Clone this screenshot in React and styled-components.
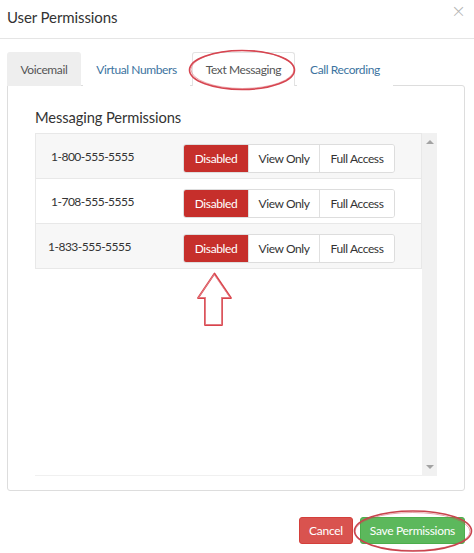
import React, { useState } from "react";
import styled, { createGlobalStyle } from "styled-components";

const GlobalStyle = createGlobalStyle`
  html, body {
    margin: 0;
    padding: 0;
    background: #fff;
  }
  body {
    font-family: Lato, "Open Sans", "Liberation Sans", sans-serif;
    color: #333;
  }
`;

const numbers = ["1-800-555-5555", "1-708-555-5555", "1-833-555-5555"];
const levels = [
  { key: "disabled", label: "Disabled", width: 64 },
  { key: "view", label: "View Only", width: 71 },
  { key: "full", label: "Full Access", width: 75 },
];

function App() {
  const [perms, setPerms] = useState(numbers.map(() => "disabled"));

  const setOne = (i, key) => {
    const next = [...perms];
    next[i] = key;
    setPerms(next);
  };

  return (
    <Modal>
      <GlobalStyle />
      <Header>
        <Title>User Permissions</Title>
        <Close>×</Close>
      </Header>
      <Body>
        <Tabs>
          <Tab grey>Voicemail</Tab>
          <Tab link>Virtual Numbers</Tab>
          <Tab active>Text Messaging</Tab>
          <Tab link>Call Recording</Tab>
          <TabCircle width="112" height="44" viewBox="0 0 112 44">
            <ellipse cx="56" cy="22" rx="52.5" ry="19.5" fill="none" stroke="#d64550" strokeWidth="1.6" />
            <ellipse cx="56.5" cy="21.5" rx="51.5" ry="19" fill="none" stroke="#d64550" strokeWidth="0.8" opacity="0.6" />
          </TabCircle>
        </Tabs>
        <Panel>
          <PanelTitle>Messaging Permissions</PanelTitle>
          <TableArea>
            <Rows>
              {numbers.map((n, i) => (
                <Row key={n} striped={i !== 1}>
                  <Phone indent={i === 2 ? 12 : 15}>{n}</Phone>
                  <Group>
                    {levels.map((l) => (
                      <GroupButton
                        key={l.key}
                        width={l.width}
                        danger={l.key === "disabled"}
                        onClick={() => setOne(i, l.key)}
                      >
                        {l.label}
                      </GroupButton>
                    ))}
                  </Group>
                </Row>
              ))}
              <Arrow width="38" height="56" viewBox="0 0 38 56">
                <path
                  d="M18.5 1.5 L35 26 L26 26 L26 53 L9 53 L9 26 L2 26 Z"
                  fill="none"
                  stroke="#d9434b"
                  strokeWidth="1.8"
                  strokeLinejoin="round"
                />
                <path
                  d="M18 2.5 L34 25.5 L25.5 25.5 L25.5 52.5 L9.5 52.5 L9.5 25.5 L2.5 25.5 Z"
                  fill="none"
                  stroke="#e58a90"
                  strokeWidth="0.8"
                />
              </Arrow>
            </Rows>
            <Scrollbar>
              <ScrollArrow />
              <ScrollArrow down />
            </Scrollbar>
          </TableArea>
        </Panel>
      </Body>
      <Footer>
        <FooterButton color="#d9534f" border="#d43f3a">Cancel</FooterButton>
        <FooterButton color="#5cb85c" border="#4cae4c">Save Permissions</FooterButton>
        <SaveCircle width="122" height="44" viewBox="0 0 122 44">
          <ellipse cx="61" cy="22" rx="58.5" ry="20" fill="none" stroke="#c9434d" strokeWidth="1.6" />
          <ellipse cx="60.5" cy="22.5" rx="57.5" ry="19" fill="none" stroke="#c9434d" strokeWidth="0.8" opacity="0.6" />
        </SaveCircle>
      </Footer>
    </Modal>
  );
}

export default App;

const Modal = styled.div`
  width: 474px;
  height: 553px;
  background: #fff;
  overflow: hidden;
`;

const Header = styled.div`
  height: 39px;
  box-sizing: border-box;
  border-bottom: 1px solid #e5e5e5;
  padding: 0 8px 0 7px;
  display: flex;
  justify-content: space-between;
  align-items: flex-start;
`;

const Title = styled.h4`
  margin: 0;
  margin-top: 7px;
  font-size: 15px;
  letter-spacing: -0.1px;
  font-weight: 400;
  line-height: 20px;
  color: #333;
`;

const Close = styled.span`
  font-size: 18px;
  line-height: 18px;
  margin-top: 2px;
  color: #b5b5b5;
  font-family: "DejaVu Sans", sans-serif;
  font-weight: 300;
`;

const Body = styled.div`
  padding: 13px 9px 0 7px;
`;

const Tabs = styled.div`
  position: relative;
  display: flex;
  height: 33px;
`;

const Tab = styled.div`
  display: flex;
  align-items: center;
  padding: 0 12.5px;
  margin-right: 2px;
  font-size: 12px;
  letter-spacing: -0.4px;
  box-sizing: border-box;
  color: ${(p) => (p.link ? "#3c73a0" : "#555")};
  background: ${(p) => (p.grey ? "#eeeeee" : "#fff")};
  border: 1px solid ${(p) => (p.active ? "#e3e3e3" : "transparent")};
  border-bottom: none;
  border-radius: 3px 3px 0 0;
  position: relative;
  z-index: 1;
  margin-bottom: -1px;
`;

const TabCircle = styled.svg`
  position: absolute;
  left: 179px;
  top: -4px;
  z-index: 2;
  pointer-events: none;
`;

const Panel = styled.div`
  height: 406px;
  box-sizing: border-box;
  border: 1px solid #dddddd;
  border-radius: 0 3px 3px 3px;
  padding: 21px 27px 14px 27px;
`;

const PanelTitle = styled.h3`
  margin: 0 0 6px 0;
  font-size: 14.7px;
  letter-spacing: -0.1px;
  font-weight: 400;
  line-height: 20px;
  color: #333;
`;

const TableArea = styled.div`
  display: flex;
  height: 343px;
`;

const Rows = styled.div`
  position: relative;
  flex: 1;
  border-bottom: 1px solid #f0f0f0;
`;

const Row = styled.div`
  display: flex;
  align-items: center;
  height: 45px;
  box-sizing: border-box;
  padding-top: 4px;
  background: ${(p) => (p.striped ? "#f7f7f7" : "#fff")};
  border: 1px solid #e8e8e8;
  border-top: none;
  &:first-child {
    border-top: 1px solid #e8e8e8;
    height: 46px;
  }
`;

const Phone = styled.div`
  width: 147px;
  box-sizing: border-box;
  padding-left: ${(p) => p.indent}px;
  font-size: 12px;
  letter-spacing: -0.5px;
  color: #333;
  margin-top: -4px;
`;

const Group = styled.div`
  display: flex;
  border-radius: 3px;
  overflow: hidden;
  border: 1px solid #ddd;
`;

const GroupButton = styled.button`
  width: ${(p) => p.width}px;
  height: 27px;
  box-sizing: border-box;
  padding: 0;
  margin: 0;
  border: none;
  border-left: 1px solid ${(p) => (p.danger ? "#c9302c" : "#e0e0e0")};
  &:first-child {
    border-left: none;
  }
  background: ${(p) => (p.danger ? "#c62f2b" : "#fff")};
  color: ${(p) => (p.danger ? "#fff" : "#333")};
  font-family: Lato, "Liberation Sans", sans-serif;
  font-size: 12px;
  letter-spacing: -0.4px;
  cursor: pointer;
`;

const Arrow = styled.svg`
  position: absolute;
  left: 161px;
  top: 139px;
  pointer-events: none;
`;

const Scrollbar = styled.div`
  width: 15px;
  background: #f1f1f1;
  display: flex;
  flex-direction: column;
  justify-content: space-between;
  align-items: center;
  padding: 7px 0 7px;
  box-sizing: border-box;
`;

const ScrollArrow = styled.div`
  width: 0;
  height: 0;
  border-left: 4px solid transparent;
  border-right: 4px solid transparent;
  ${(p) =>
    p.down
      ? "border-top: 4px solid #a3a3a3;"
      : "border-bottom: 4px solid #a3a3a3;"}
`;

const Footer = styled.div`
  position: relative;
  display: flex;
  justify-content: flex-end;
  gap: 7px;
  padding: 26px 9px 0 0;
`;

const FooterButton = styled.button`
  height: 27px;
  padding: 0 9px;
  border: 1px solid ${(p) => p.border};
  background: ${(p) => p.color};
  color: #fff;
  border-radius: 3px;
  font-family: Lato, "Liberation Sans", sans-serif;
  font-size: 12px;
  letter-spacing: -0.3px;
  cursor: pointer;
`;

const SaveCircle = styled.svg`
  position: absolute;
  right: 0px;
  top: 18px;
  pointer-events: none;
`;
